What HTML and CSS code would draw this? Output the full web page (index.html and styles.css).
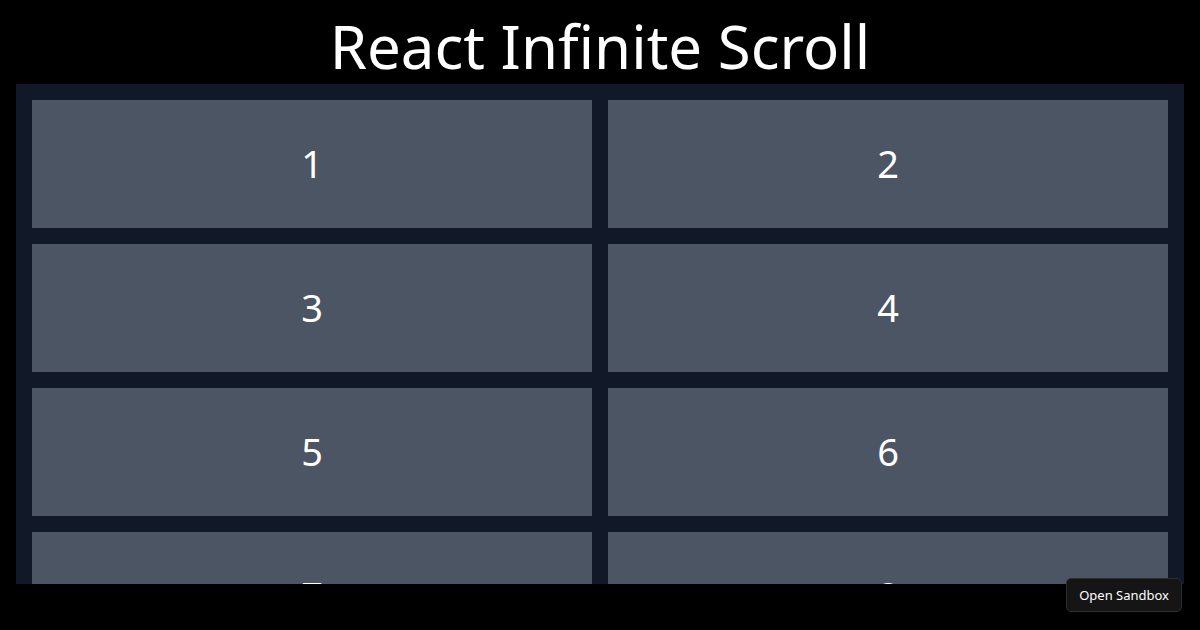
FILE: index.html
```html
<!DOCTYPE html>
<html lang="en">

<head>
    <meta charset="UTF-8">
    <meta name="viewport" content="width=device-width, initial-scale=1.0">
    <title>React Infinite Scroll</title>
    <link rel="stylesheet" href="styles.css">
</head>

<body>
    <div class="app">
        <h1>React Infinite Scroll</h1>

        <div class="list">
            <div class="item">1</div>
            <div class="item">2</div>
            <div class="item">3</div>
            <div class="item">4</div>
            <div class="item">5</div>
            <div class="item">6</div>
            <div class="item">7</div>
            <div class="item">8</div>
            <div class="item">9</div>
            <div class="item">10</div>
        </div>
    </div>

    <a class="sandbox-button" href="#">Open Sandbox</a>
</body>

</html>
```

FILE: styles.css
```css
body {
    font-family: "Noto Sans", "Open Sans", sans-serif;
    margin: 0;
    padding: 0;
    background-color: #000;
    color: #fff;
    height: 100vh;
    overflow: hidden;
}

.app {
    display: flex;
    flex-direction: column;
    height: 584px;
    padding: 0 16px;
}

h1 {
    margin: 0;
    font-size: 60px;
    font-weight: 400;
    line-height: 84px;
    height: 84px;
    padding-top: 4px;
    box-sizing: border-box;
    text-align: center;
    flex-shrink: 0;
}

.list {
    flex: 1;
    overflow: hidden;
    background-color: #111827;
    padding: 16px;
    display: grid;
    grid-template-columns: 1fr 1fr;
    grid-auto-rows: 128px;
    gap: 16px;
}

.item {
    background-color: #4b5563;
    display: flex;
    justify-content: center;
    align-items: center;
    font-size: 38px;
    padding-bottom: 2px;
}

.sandbox-button {
    position: fixed;
    right: 18px;
    bottom: 18px;
    padding: 0 12px;
    height: 34px;
    box-sizing: border-box;
    display: flex;
    align-items: center;
    background-color: #151515;
    border: 1px solid #2e2e2e;
    border-radius: 5px;
    color: #fff;
    font-size: 13px;
    text-decoration: none;
}
```
